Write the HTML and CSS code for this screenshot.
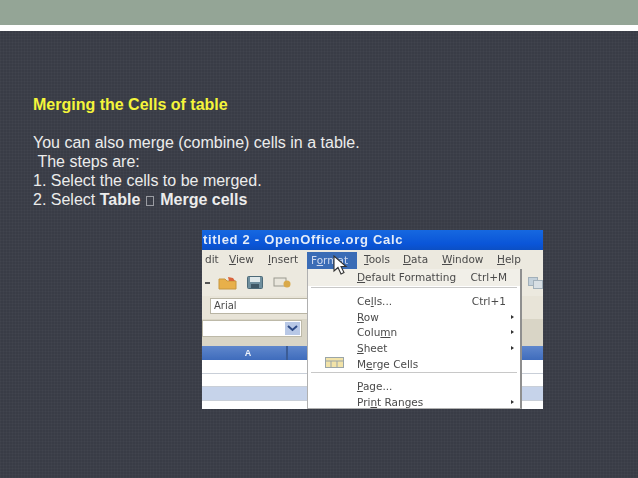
FILE: index.html
```html
<!DOCTYPE html>
<html lang="en">
<head>
<meta charset="utf-8">
<title>Merging the Cells of table</title>
<link rel="stylesheet" href="styles.css">
</head>
<body>
<div class="band"></div>
<div class="rule"></div>
<main class="slide">
  <h1 class="title">Merging the Cells of table</h1>
  <p class="line first">You can also merge (combine) cells in a table.</p>
  <p class="line">&nbsp;The steps are:</p>
  <p class="line">1. Select the cells to be merged.</p>
  <p class="line">2. Select <b>Table</b> <span class="box"></span> <b>Merge cells</b></p>
  <div class="shot">
    <div class="titlebar">titled 2 - OpenOffice.org Calc</div>
    <div class="menubar">
      <span class="mi m-edit">dit</span><span class="mi m-view"><u>V</u>iew</span><span class="mi m-insert"><u>I</u>nsert</span><span class="mi m-format">F<u>o</u>rmat</span><span class="mi m-tools"><u>T</u>ools</span><span class="mi m-data"><u>D</u>ata</span><span class="mi m-window"><u>W</u>indow</span><span class="mi m-help"><u>H</u>elp</span>
    </div>
    <div class="work">
      <div class="toolbar">
        <span class="dash"></span>
        <svg class="tb-icon" width="19" height="14" viewBox="0 0 19 14"><path d="M1 3h6l2 2h9v8H1z" fill="#e8b04a" stroke="#c7963f"/><path d="M10 1l5 1 2 3h-6z" fill="#d9643c"/></svg>
        <svg class="tb-icon" width="16" height="13" viewBox="0 0 16 13"><rect x="0.500" y="0.500" width="15" height="12" rx="1" fill="#6f8f9e" stroke="#4d6a78"/><rect x="3" y="1" width="10" height="5" fill="#dfe8ea"/><rect x="4" y="8" width="8" height="4" fill="#3f5866"/></svg>
        <svg class="tb-icon" width="19" height="11" viewBox="0 0 19 11"><rect x="1" y="1" width="12" height="8" fill="#e9e6dc" stroke="#9a9a90"/><circle cx="14" cy="7" r="3.500" fill="#d9a94a"/></svg>
      </div>
      <div class="fontrow"><span class="fontbox">Arial</span></div>
      <div class="comborow"><span class="combo"><span class="drop"><svg width="11" height="7" viewBox="0 0 11 7"><path d="M1 1l4.500 4L10 1" fill="none" stroke="#2d4a86" stroke-width="2"/></svg></span></span></div>
      <div class="header"><span class="colA">A</span></div>
      <div class="cell"></div>
      <div class="cell"></div>
      <div class="cell sel"></div>
      <div class="cell"></div>
      <div class="menu">
        <div class="item top"><span><u>D</u>efault Formatting</span><span>Ctrl+M</span></div>
        <div class="sep"></div>
        <div class="item"><span>Ce<u>l</u>ls...</span><span class="keys">Ctrl+1</span></div>
        <div class="item"><span><u>R</u>ow</span><i class="arr"></i></div>
        <div class="item"><span>Colu<u>m</u>n</span><i class="arr"></i></div>
        <div class="item"><span><u>S</u>heet</span><i class="arr"></i></div>
        <div class="item"><span>M<u>e</u>rge Cells</span></div>
        <div class="sep"></div>
        <div class="item"><span><u>P</u>age...</span></div>
        <div class="item"><span>Pri<u>n</u>t Ranges</span><i class="arr"></i></div>
        <svg class="merge-icon" width="19" height="11" viewBox="0 0 19 11"><rect x="0.500" y="0.500" width="18" height="10" fill="#f2e3a8" stroke="#9aa5a8"/><path d="M0 4h19M6 4v7M12 4v7" stroke="#9aa5a8"/></svg>
      </div>
      <svg class="cursor" width="15" height="21" viewBox="0 0 15 21"><path d="M1 1v15l4-3.500 3 6.500 3-1.500-3-6h5z" fill="#fff" stroke="#333" stroke-width="1.100"/></svg>
      <svg class="side-icon" width="15" height="12" viewBox="0 0 15 12"><rect x="0.500" y="0.500" width="9" height="8" fill="#c3d0da" stroke="#a2b0ba"/><rect x="5.500" y="3.500" width="9" height="8" fill="#d8dfe4" stroke="#a2b0ba"/></svg>
    </div>
  </div>
</main>
</body>
</html>
```
FILE: styles.css
```css
* { box-sizing: border-box; }
html, body { margin: 0; padding: 0; }
body {
  width: 638px;
  height: 478px;
  overflow: hidden;
  background: #3b3e48;
  font-family: "Liberation Sans", Arial, sans-serif;
}
.band { height: 25px; background: #94a596; }
.rule { height: 6px; background: #fff; }
.slide {
  height: 447px;
  padding: 64px 0 0 33px;
  background-color: #3b3e48;
  background-image:
    repeating-linear-gradient(0deg, rgba(255,255,255,.014) 0 1px, rgba(0,0,0,.018) 1px 3px),
    repeating-linear-gradient(90deg, rgba(255,255,255,.014) 0 1px, rgba(0,0,0,.018) 1px 3px);
  color: #ececec;
}
.title {
  margin: 0 0 19px;
  font-size: 16px;
  line-height: 19px;
  font-weight: 700;
  color: #f4f53a;
}
.line {
  margin: 0;
  font-size: 16px;
  line-height: 19px;
  white-space: pre;
}
.box {
  display: inline-block;
  width: 8px;
  height: 10px;
  margin: 0 2px 0 1px;
  border: 1px solid #9a9ca2;
  vertical-align: -1px;
}
.shot {
  position: relative;
  width: 341px;
  height: 179px;
  margin: 21px 0 0 169px;
  overflow: hidden;
  background: #fff;
  font-family: "DejaVu Sans", sans-serif;
  color: #4a4a4a;
  font-size: 10px;
  filter: blur(0.5px);
}
.titlebar {
  height: 20px;
  padding-left: 1px;
  background: linear-gradient(#1668e0, #0a55d8 70%, #0b4fc4);
  color: #e4ecf8;
  font-family: "Liberation Sans", sans-serif;
  font-size: 13px;
  font-weight: 700;
  letter-spacing: 0.7px;
  line-height: 20px;
  white-space: nowrap;
}
.menubar {
  display: flex;
  align-items: center;
  height: 19px;
  background: #ece9df;
  font-size: 10.500px;
}
.mi { display: block; line-height: 17px; white-space: nowrap; }
.m-edit { width: 27px; padding-left: 3px; }
.m-view { width: 39px; }
.m-insert { width: 39px; }
.m-format { width: 50px; height: 17px; margin-top: 2px; padding-left: 4px; background: #3a6cb6; color: #cfdaf0; }
.m-tools { width: 46px; padding-left: 7px; }
.m-data { width: 39px; }
.m-window { width: 55px; }
.m-help { width: 40px; }
.work { position: relative; height: 140px; background: #ece9df; }
.toolbar {
  display: flex;
  align-items: center;
  height: 27px;
  padding-left: 3px;
  background: #ece9df;
}
.dash { width: 5px; height: 2px; margin-right: 8px; background: #555; }
.tb-icon { margin-right: 10px; }
.fontrow { height: 23px; padding: 2px 0 0 8px; background: #e8e4d8; }
.fontbox {
  display: block;
  width: 100px;
  height: 16px;
  padding-left: 3px;
  background: #fff;
  border: 1px solid #b9b5a4;
  font-size: 10px;
  line-height: 14px;
}
.comborow { height: 27px; padding-top: 1px; background: #d9d5c6; }
.combo {
  display: flex;
  justify-content: flex-end;
  align-items: center;
  width: 100px;
  height: 17px;
  background: #fff;
  border: 1px solid #bdb9a8;
}
.drop {
  display: flex;
  align-items: center;
  justify-content: center;
  width: 15px;
  height: 13px;
  margin-right: 1px;
  background: #b8c8e6;
}
.header {
  height: 14px;
  background: linear-gradient(#5f87cc, #3f6cbc);
  color: #eef2fa;
  font-family: "Liberation Sans", sans-serif;
  font-size: 9px;
  font-weight: 700;
  line-height: 14px;
}
.colA { display: block; width: 86px; padding-left: 8px; text-align: center; border-right: 2px solid #3b5c96; }
.cell { height: 13.500px; background: #fff; border-bottom: 1px solid #c9cfd8; }
.sel { background: #c6d3ea; }
.menu {
  position: absolute;
  left: 105px;
  top: 0;
  width: 215px;
  height: 140px;
  padding: 2px 6px 0 49px;
  background: #fff;
  border: 1px solid #b0b0b0;
  border-right: 2px solid #8f8f8f;
  border-top: 0;
  font-size: 10.500px;
}
.item {
  display: flex;
  justify-content: space-between;
  align-items: center;
  height: 15.700px;
  white-space: nowrap;
}
.item.top { margin: -2px -6px 0 -49px; padding: 0 13px 2px 49px; height: 17px; background: #f1efe8; }
.keys { margin-right: 8px; }
.sep { height: 1px; margin: 1px -3px 5px -46px; background: #c8c8c8; }
.arr {
  width: 0;
  height: 0;
  margin-right: 0;
  border-left: 3px solid #333;
  border-top: 2px solid transparent;
  border-bottom: 2px solid transparent;
}
.merge-icon { position: absolute; left: 17px; top: 88px; }
.cursor { position: absolute; left: 131px; top: -14px; }
.side-icon { position: absolute; left: 326px; top: 8px; }
```
